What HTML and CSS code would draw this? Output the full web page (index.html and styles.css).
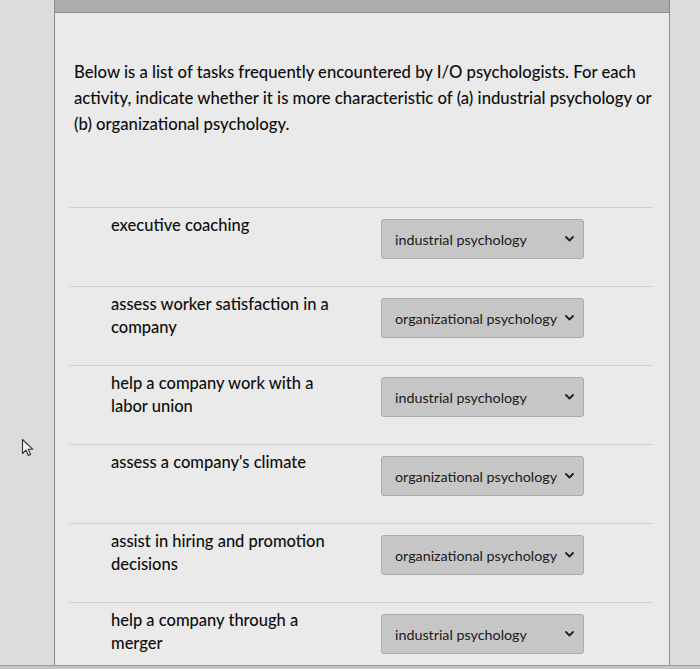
FILE: index.html
```html
<!DOCTYPE html>
<html lang="en">
    <head>
        <meta charset="UTF-8" />
        <meta name="viewport" content="width=device-width, initial-scale=1.0" />
        <title>I/O Psychology Tasks</title>
        <link rel="stylesheet" href="styles.css">
    </head>
    <body>
        <div class="page">
            <div class="topbar"></div>

            <p class="intro">
                Below is a list of tasks frequently encountered by I/O psychologists. For each
                activity, indicate whether it is more characteristic of (a) industrial psychology or
                (b) organizational psychology.
            </p>

            <div class="questions">
                <div class="row">
                    <div class="label">executive coaching</div>
                    <div class="select">
                        <span>industrial psychology</span>
                        <svg class="chevron" width="9" height="6" viewBox="0 0 9 6"><path d="M1 1l3.5 3.5L8 1" /></svg>
                    </div>
                </div>

                <div class="row">
                    <div class="label">assess worker satisfaction in a company</div>
                    <div class="select">
                        <span>organizational psychology</span>
                        <svg class="chevron" width="9" height="6" viewBox="0 0 9 6"><path d="M1 1l3.5 3.5L8 1" /></svg>
                    </div>
                </div>

                <div class="row">
                    <div class="label">help a company work with a labor union</div>
                    <div class="select">
                        <span>industrial psychology</span>
                        <svg class="chevron" width="9" height="6" viewBox="0 0 9 6"><path d="M1 1l3.5 3.5L8 1" /></svg>
                    </div>
                </div>

                <div class="row">
                    <div class="label">assess a company's climate</div>
                    <div class="select">
                        <span>organizational psychology</span>
                        <svg class="chevron" width="9" height="6" viewBox="0 0 9 6"><path d="M1 1l3.5 3.5L8 1" /></svg>
                    </div>
                </div>

                <div class="row">
                    <div class="label">assist in hiring and promotion decisions</div>
                    <div class="select">
                        <span>organizational psychology</span>
                        <svg class="chevron" width="9" height="6" viewBox="0 0 9 6"><path d="M1 1l3.5 3.5L8 1" /></svg>
                    </div>
                </div>

                <div class="row">
                    <div class="label">help a company through a merger</div>
                    <div class="select">
                        <span>industrial psychology</span>
                        <svg class="chevron" width="9" height="6" viewBox="0 0 9 6"><path d="M1 1l3.5 3.5L8 1" /></svg>
                    </div>
                </div>
            </div>
        </div>

        <div class="screen-edge"></div>

        <!-- mouse pointer -->
        <svg class="cursor" width="14" height="20" viewBox="0 0 14 20">
            <path d="M1.5 1.5v14l3.5-3.3 2.4 5.3 2.2-1-2.4-5.2h4.6z" />
        </svg>
    </body>
</html>
```

FILE: styles.css
```css
body {
    font-family: 'Lato', 'Open Sans', sans-serif;
    background-color: #dcdcdc;
    margin: 0;
    padding: 0;
    height: 669px;
    overflow: hidden;
    position: relative;
    color: #0e0e0e;
}
.page {
    margin-left: 54px;
    width: 614px;
    height: 669px;
    background-color: #eaeaea;
    border-left: 1px solid #8c8c8c;
    border-right: 1px solid #8c8c8c;
}
.topbar {
    height: 12px;
    background-color: #adadad;
    border-bottom: 1px solid #8e8e8e;
}
.intro {
    margin: 0;
    padding: 46px 0 0 19px;
    max-width: 588px;
    font-size: 16.7px;
    font-weight: 500;
    line-height: 26px;
}
.questions {
    margin: 70px 16px 0 14px;
}
.row {
    display: grid;
    grid-template-columns: 312px 203px;
    height: 78px;
    border-top: 1px solid #d0d0d0;
}
.label {
    padding: 6px 0 0 42px;
    width: 221px;
    font-size: 16.5px;
    font-weight: 500;
    line-height: 23px;
}
.select {
    margin-top: 11px;
    height: 38px;
    display: flex;
    align-items: center;
    justify-content: space-between;
    padding: 0 9px 0 13px;
    background-color: #c6c6c6;
    border: 1px solid #aaaaaa;
    border-radius: 3px;
    font-size: 14.3px;
    color: #1a1a1a;
}
.chevron path {
    fill: none;
    stroke: #222;
    stroke-width: 1.8;
    stroke-linecap: round;
    stroke-linejoin: round;
}
.screen-edge {
    position: absolute;
    left: 0;
    right: 0;
    top: 665px;
    height: 4px;
    background-color: #c4c4c4;
    border-top: 1px solid #9a9a9a;
}
.cursor {
    position: absolute;
    left: 21px;
    top: 438px;
}
.cursor path {
    fill: #f2f2f2;
    stroke: #333;
    stroke-width: 1.1;
    stroke-linejoin: round;
}
```
